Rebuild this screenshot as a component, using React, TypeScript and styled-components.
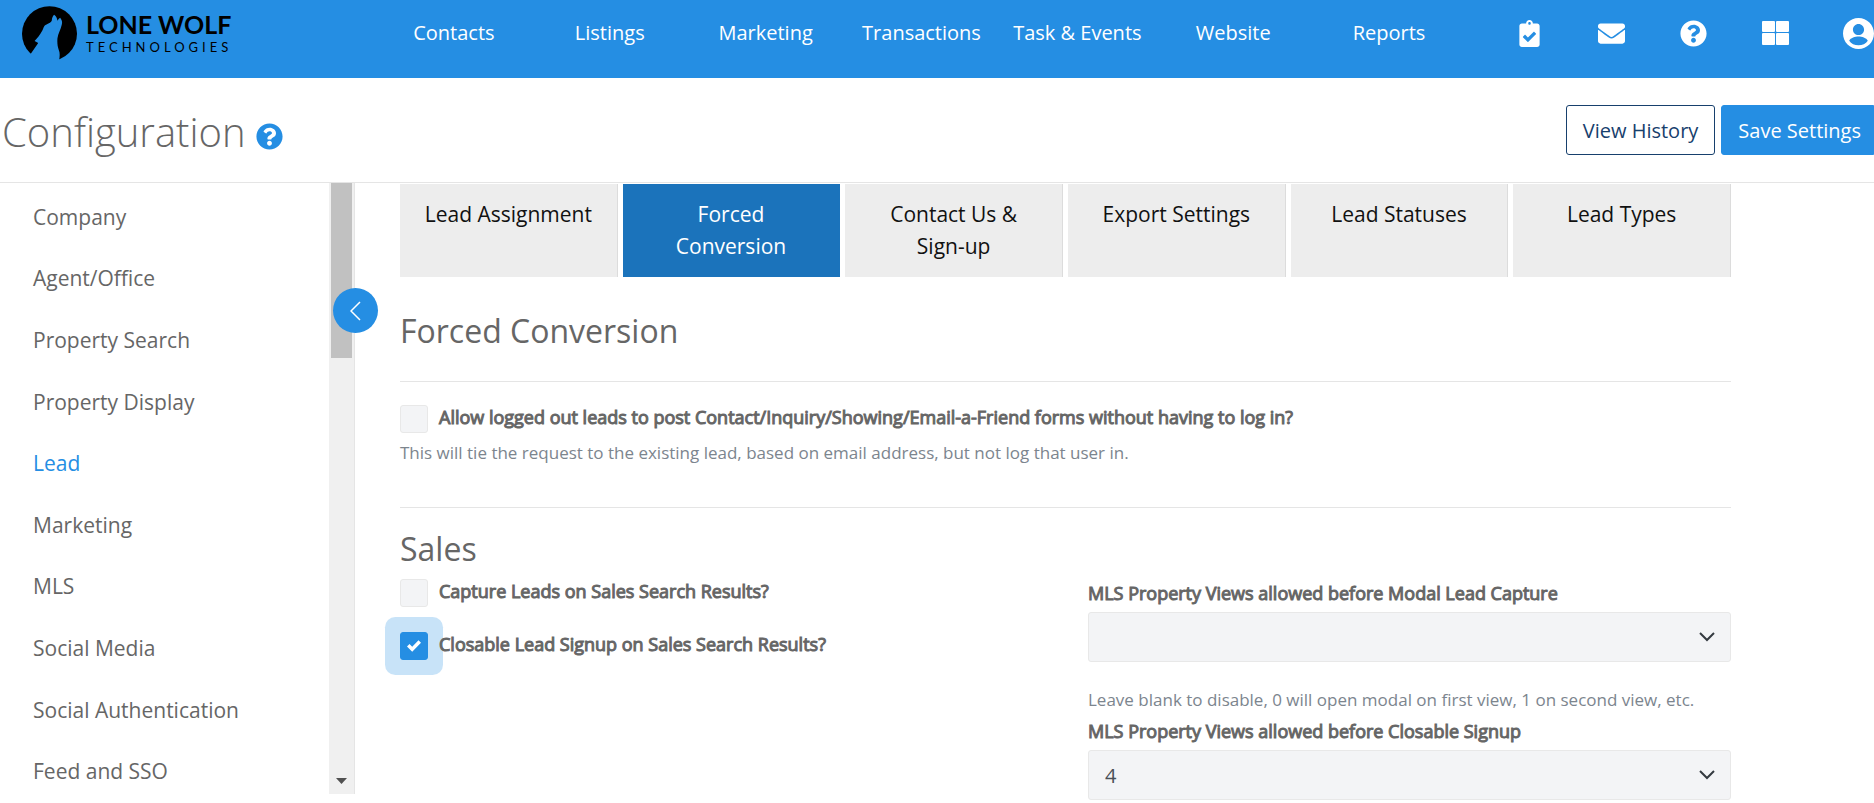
import React, { useState } from "react";
import styled, { createGlobalStyle } from "styled-components";
import { FaClipboardCheck, FaEnvelope, FaQuestionCircle } from "react-icons/fa";

const blue = "#258ee3";
const rule = "#e5e5e5";

const GlobalStyle = createGlobalStyle`
  * { box-sizing: border-box; }
  body {
    margin: 0;
    background: #fff;
    color: #666;
    font-family: "Open Sans", "Noto Sans", sans-serif;
    font-size: 20px;
    overflow: hidden;
  }
  button, select { font-family: inherit; }
  svg { display: block; }
`;

const Header = styled.header`
  display: flex;
  height: 78px;
  background: ${blue};
`;

const Logo = styled.a`
  display: flex;
  width: 376px;
  padding: 6px 0 0 22px;
  gap: 9px;
  color: #000;
  text-decoration: none;
  font-family: Lato, sans-serif;
`;

const Wordmark = styled.span`
  display: flex;
  flex-direction: column;
  padding-top: 4px;
`;

const BrandName = styled.span`
  font-size: 25px;
  line-height: 28px;
  font-weight: 700;
`;

const BrandSub = styled.span`
  font-size: 13px;
  line-height: 18px;
  letter-spacing: 4px;
`;

const Nav = styled.nav`
  flex: 1;
  display: grid;
  grid-template-columns: repeat(7, 1fr);
  margin-right: 21px;
  height: 64px;
  align-items: center;
`;

const NavLink = styled.a`
  color: #fff;
  text-align: center;
  text-decoration: none;
  white-space: nowrap;
`;

const HeaderIcons = styled.div`
  display: flex;
  height: 66px;
`;

const IconButton = styled.button<{ $last?: boolean }>`
  display: flex;
  align-items: center;
  justify-content: ${(p) => (p.$last ? "flex-end" : "center")};
  width: ${(p) => (p.$last ? 58 : 82)}px;
  padding: 0;
  border: 0;
  background: none;
  color: #fff;
`;

const TitleBar = styled.div`
  display: flex;
  align-items: center;
  justify-content: space-between;
  height: 105px;
  padding-left: 2px;
  border-bottom: 1px solid ${rule};
`;

const TitleGroup = styled.div`
  display: flex;
  align-items: center;
  gap: 10px;
  padding-top: 4px;
`;

const Title = styled.h1`
  margin: 0;
  font-size: 40px;
  line-height: 56px;
  font-weight: 300;
`;

const HelpButton = styled.button`
  padding: 8px 0 0;
  border: 0;
  background: none;
  color: ${blue};
`;

const Actions = styled.div`
  display: flex;
  gap: 6px;
`;

const Button = styled.button<{ $primary?: boolean }>`
  height: 50px;
  padding: 0 ${(p) => (p.$primary ? 12 : 16)}px 0 16px;
  border: 1px solid ${(p) => (p.$primary ? blue : "#17406d")};
  border-radius: ${(p) => (p.$primary ? "3px 0 0 3px" : "3px")};
  background: ${(p) => (p.$primary ? blue : "#fff")};
  color: ${(p) => (p.$primary ? "#fff" : "#17406d")};
  font-size: 20px;
`;

const Body = styled.div`
  display: flex;
  align-items: flex-start;
`;

const Sidebar = styled.aside`
  position: relative;
  display: flex;
  width: 355px;
  height: calc(100vh - 192px);
  border-right: 1px solid ${rule};
`;

const SideList = styled.ul`
  flex: 1;
  display: grid;
  grid-auto-rows: 1fr;
  align-items: center;
  height: 616px;
  margin: 3px 0 0;
  padding: 0 0 0 33px;
  list-style: none;
`;

const SideLink = styled.a<{ $active?: boolean }>`
  color: ${(p) => (p.$active ? blue : "#666")};
  font-size: 21px;
  text-decoration: none;
`;

const Track = styled.div`
  display: flex;
  flex-direction: column;
  align-items: center;
  justify-content: space-between;
  width: 25px;
  padding-bottom: 9px;
  background: #f0f0f0;
`;

const Thumb = styled.div`
  width: 21px;
  height: 175px;
  background: #c1c1c1;
`;

const Collapse = styled.button`
  position: absolute;
  top: 105px;
  right: -24px;
  display: flex;
  align-items: center;
  justify-content: center;
  width: 45px;
  height: 45px;
  padding: 0;
  border: 0;
  border-radius: 50%;
  background: ${blue};
`;

const Main = styled.main`
  flex: 1;
  padding: 1px 143px 0 45px;
`;

const Tabs = styled.div`
  display: grid;
  grid-template-columns: repeat(6, 1fr);
  gap: 5px;
`;

const Tab = styled.button<{ $active?: boolean }>`
  display: flex;
  justify-content: center;
  height: 93px;
  padding: 14px 24px 0;
  border: 0;
  border-right: 1px solid ${(p) => (p.$active ? "#1b73bb" : "#dcdcdc")};
  background: ${(p) => (p.$active ? "#1b73bb" : "#ededed")};
  color: ${(p) => (p.$active ? "#fff" : "#111")};
  font-size: 21px;
  line-height: 32px;
`;

const Heading = styled.h2`
  margin: 0;
  font-size: 32px;
  line-height: 44px;
  font-weight: 400;
`;

const Section = styled.section<{ $top: number; $bottom: number }>`
  padding: ${(p) => p.$top}px 0 ${(p) => p.$bottom}px;
  border-bottom: ${(p) => (p.$bottom ? `1px solid ${rule}` : "0")};
`;

const Columns = styled.div`
  display: grid;
  grid-template-columns: 1fr 1fr;
  gap: 45px;
  padding-top: 8px;
`;

const CheckList = styled.div`
  display: flex;
  flex-direction: column;
  gap: 25px;
`;

const CheckRow = styled.label`
  display: flex;
  gap: 11px;
  height: 28px;
`;

const CheckText = styled.span`
  font-size: 18px;
  line-height: 24px;
  -webkit-text-stroke: 1px #666;
`;

const Checkbox = styled.input`
  appearance: none;
  flex: none;
  width: 28px;
  height: 28px;
  margin: 0;
  border: 1px solid #e8e8e8;
  border-radius: 3px;
  background: #f3f4f6;
  &:checked {
    border-color: ${blue};
    background: ${blue}
      url("data:image/svg+xml,%3Csvg xmlns='http://www.w3.org/2000/svg' viewBox='0 0 8 8'%3E%3Cpath fill='%23fff' d='M6.564.75l-3.59 3.612-1.538-1.55L0 4.26l2.974 2.99L8 2.193z'/%3E%3C/svg%3E")
      center / 14px 14px no-repeat;
    box-shadow: 0 0 0 15px rgba(37, 142, 227, 0.25);
  }
`;

const HelpText = styled.p<{ $top: number }>`
  margin: ${(p) => p.$top}px 0 0;
  color: #7c858e;
  font-size: 17px;
  line-height: 26px;
`;

const Fields = styled.div`
  display: flex;
  flex-direction: column;
  padding-top: 1px;
`;

const FieldLabel = styled.label`
  margin-bottom: 6px;
  font-size: 18px;
  line-height: 26px;
  -webkit-text-stroke: 1px #666;
  ${HelpText} + & {
    margin-top: 5px;
  }
`;

const SelectWrap = styled.div`
  position: relative;
`;

const Select = styled.select`
  appearance: none;
  display: block;
  width: 100%;
  height: 50px;
  padding: 0 16px;
  border: 1px solid #e8e8e8;
  border-radius: 3px;
  background: #f3f4f6;
  color: #495057;
  font-size: 20px;
`;

const Chevron = styled.svg`
  position: absolute;
  right: 16px;
  top: 19px;
  pointer-events: none;
`;

const WolfMark = () => (
  <svg width="55" height="56" viewBox="66 17 166 168" aria-hidden="true">
    <circle cx="149" cy="100" r="83" fill="#000" />
    <path
      fill={blue}
      d="M86 168L92 161L115 128L104 122C112 113 120 104 127 91C132 82 131 76 140 72C148 68 154 66 156 60C156 53 159 47 163 43C168 46 172 53 173 61C175 57 178 54 181 52C187 60 188 64 186 73C183 88 175 99 173 114C172 127 173 138 177 149C181 158 180 168 178 180L176 190L120 194Z"
    />
  </svg>
);

const Grid = () => (
  <svg width="27" height="24" viewBox="0 0 27 24" fill="#fff" aria-hidden="true">
    <rect width="13" height="11" rx="1" />
    <rect x="14" width="13" height="11" rx="1" />
    <rect y="12" width="13" height="12" rx="1" />
    <rect x="14" y="12" width="13" height="12" rx="1" />
  </svg>
);

const Account = () => (
  <svg width="31" height="31" viewBox="2 2 20 20" fill="#fff" aria-hidden="true">
    <path d="M12 2C6.48 2 2 6.48 2 12s4.48 10 10 10 10-4.48 10-10S17.52 2 12 2zm0 3.8c2 0 3.6 1.6 3.6 3.6S14 13 12 13s-3.6-1.6-3.6-3.6S10 5.8 12 5.8zm0 13.8c-2.5 0-4.7-1.1-6-3 .8-1.6 3.9-2.6 6-2.6s5.2 1 6 2.6c-1.3 1.9-3.5 3-6 3z" />
  </svg>
);

const DownChevron = () => (
  <Chevron width="16" height="12" viewBox="0 0 16 12" aria-hidden="true">
    <path d="M1 2L8 9L15 2" fill="none" stroke="#343a40" strokeWidth="2" />
  </Chevron>
);

const navItems = ["Contacts", "Listings", "Marketing", "Transactions", "Task & Events", "Website", "Reports"];
const sideItems = [
  "Company", "Agent/Office", "Property Search", "Property Display", "Lead",
  "Marketing", "MLS", "Social Media", "Social Authentication", "Feed and SSO",
];
const tabItems = ["Lead Assignment", "Forced Conversion", "Contact Us & Sign-up", "Export Settings", "Lead Statuses", "Lead Types"];

export default function App() {
  const [tab, setTab] = useState("Forced Conversion");
  return (
    <>
      <GlobalStyle />
      <Header>
        <Logo href="#">
          <WolfMark />
          <Wordmark>
            <BrandName>LONE WOLF</BrandName>
            <BrandSub>TECHNOLOGIES</BrandSub>
          </Wordmark>
        </Logo>
        <Nav>
          {navItems.map((n) => (
            <NavLink key={n} href="#">{n}</NavLink>
          ))}
        </Nav>
        <HeaderIcons>
          <IconButton aria-label="Tasks"><FaClipboardCheck size={27} /></IconButton>
          <IconButton aria-label="Messages"><FaEnvelope size={27} /></IconButton>
          <IconButton aria-label="Help"><FaQuestionCircle size={27} /></IconButton>
          <IconButton aria-label="Apps"><Grid /></IconButton>
          <IconButton $last aria-label="Account"><Account /></IconButton>
        </HeaderIcons>
      </Header>
      <TitleBar>
        <TitleGroup>
          <Title>Configuration</Title>
          <HelpButton aria-label="About configuration"><FaQuestionCircle size={27} /></HelpButton>
        </TitleGroup>
        <Actions>
          <Button>View History</Button>
          <Button $primary>Save Settings</Button>
        </Actions>
      </TitleBar>
      <Body>
        <Sidebar>
          <SideList>
            {sideItems.map((s) => (
              <li key={s}><SideLink href="#" $active={s === "Lead"}>{s}</SideLink></li>
            ))}
          </SideList>
          <Track>
            <Thumb />
            <svg width="11" height="7" viewBox="0 0 11 7" aria-hidden="true">
              <path d="M0 0H11L5.5 6Z" fill="#505050" />
            </svg>
          </Track>
          <Collapse aria-label="Collapse menu">
            <svg width="12" height="20" viewBox="0 0 12 20" aria-hidden="true">
              <path d="M10 1L1 10L10 19" fill="none" stroke="#fff" strokeWidth="1.5" />
            </svg>
          </Collapse>
        </Sidebar>
        <Main>
          <Tabs role="tablist">
            {tabItems.map((t) => (
              <Tab key={t} role="tab" aria-selected={t === tab} $active={t === tab} onClick={() => setTab(t)}>
                {t}
              </Tab>
            ))}
          </Tabs>
          <Section $top={32} $bottom={28}>
            <Heading>Forced Conversion</Heading>
          </Section>
          <Section $top={23} $bottom={41}>
            <CheckRow>
              <Checkbox type="checkbox" />
              <CheckText>Allow logged out leads to post Contact/Inquiry/Showing/Email-a-Friend forms without having to log in?</CheckText>
            </CheckRow>
            <HelpText $top={7}>This will tie the request to the existing lead, based on email address, but not log that user in.</HelpText>
          </Section>
          <Section $top={19} $bottom={0}>
            <Heading>Sales</Heading>
            <Columns>
              <CheckList>
                <CheckRow>
                  <Checkbox type="checkbox" />
                  <CheckText>Capture Leads on Sales Search Results?</CheckText>
                </CheckRow>
                <CheckRow>
                  <Checkbox type="checkbox" defaultChecked />
                  <CheckText>Closable Lead Signup on Sales Search Results?</CheckText>
                </CheckRow>
              </CheckList>
              <Fields>
                <FieldLabel htmlFor="modal-views">MLS Property Views allowed before Modal Lead Capture</FieldLabel>
                <SelectWrap>
                  <Select id="modal-views" defaultValue="">
                    <option value=""></option>
                    <option>4</option>
                  </Select>
                  <DownChevron />
                </SelectWrap>
                <HelpText $top={25}>Leave blank to disable, 0 will open modal on first view, 1 on second view, etc.</HelpText>
                <FieldLabel htmlFor="closable-views">MLS Property Views allowed before Closable Signup</FieldLabel>
                <SelectWrap>
                  <Select id="closable-views" defaultValue="4">
                    <option value=""></option>
                    <option>4</option>
                  </Select>
                  <DownChevron />
                </SelectWrap>
              </Fields>
            </Columns>
          </Section>
        </Main>
      </Body>
    </>
  );
}
